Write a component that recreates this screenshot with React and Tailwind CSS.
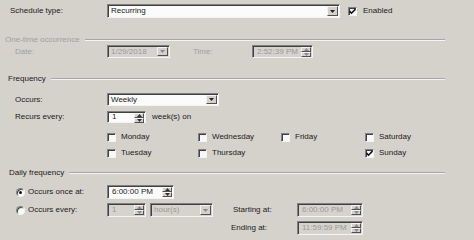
import React from "react";

function Arrow({ disabled }) {
  return (
    <svg width="5" height="3" viewBox="0 0 5 3">
      <path d="M0 0 H5 L2.5 3 Z" fill={disabled ? "#8a8a8a" : "#222"} />
    </svg>
  );
}

function DropBtn({ disabled }) {
  return (
    <div className="flex h-full w-[11px] items-center justify-center border border-t-[#f4f4f4] border-l-[#f4f4f4] border-b-[#505050] border-r-[#505050] bg-[#d4d1ca]">
      <Arrow disabled={disabled} />
    </div>
  );
}

function Combo({ className, text, disabled }) {
  return (
    <div
      className={
        "flex items-stretch border border-t-[#808080] border-l-[#808080] border-b-[#f4f4f4] border-r-[#f4f4f4] p-[1px] shadow-[inset_1px_1px_0_#404040] " +
        (disabled ? "bg-[#d6d3cc] " : "bg-[#fbfbfb] ") +
        className
      }
    >
      <div
        className={
          "flex flex-1 items-center pl-[2px] leading-none " +
          (disabled ? "text-[#9a9a9a]" : "text-[#1a1a1a]")
        }
      >
        {text}
      </div>
      <DropBtn disabled={disabled} />
    </div>
  );
}

function SpinArrow({ up, disabled }) {
  return (
    <svg width="5" height="3" viewBox="0 0 5 3">
      <path d={up ? "M0 3 H5 L2.5 0 Z" : "M0 0 H5 L2.5 3 Z"} fill={disabled ? "#8a8a8a" : "#333"} />
    </svg>
  );
}

function Spin({ className, text, disabled }) {
  return (
    <div
      className={
        "flex items-stretch border border-t-[#808080] border-l-[#808080] border-b-[#f4f4f4] border-r-[#f4f4f4] p-[1px] shadow-[inset_1px_1px_0_#404040] " +
        (disabled ? "bg-[#d6d3cc] " : "bg-[#fbfbfb] ") +
        className
      }
    >
      <div
        className={
          "flex flex-1 items-center pl-[3px] leading-none " +
          (disabled ? "text-[#9a9a9a]" : "text-[#1a1a1a]")
        }
      >
        {text}
      </div>
      <div className="flex w-[10px] flex-col">
        <div className="flex flex-1 items-center justify-center border border-t-[#f4f4f4] border-l-[#f4f4f4] border-b-[#505050] border-r-[#505050] bg-[#d4d1ca]">
          <SpinArrow up disabled={disabled} />
        </div>
        <div className="flex flex-1 items-center justify-center border border-t-[#f4f4f4] border-l-[#f4f4f4] border-b-[#505050] border-r-[#505050] bg-[#d4d1ca]">
          <SpinArrow disabled={disabled} />
        </div>
      </div>
    </div>
  );
}

function Check({ checked }) {
  return (
    <div className="flex h-[9px] w-[9px] shrink-0 items-center justify-center border border-t-[#808080] border-l-[#808080] border-b-[#f4f4f4] border-r-[#f4f4f4] bg-[#f8f8f8] shadow-[inset_1px_1px_0_#404040]">
      {checked && (
        <svg width="7" height="7" viewBox="0 0 7 7">
          <path d="M0.5 3 L2.5 5.2 L6.5 1" stroke="#111" strokeWidth="1.6" fill="none" />
        </svg>
      )}
    </div>
  );
}

function Radio({ checked }) {
  return (
    <div className="flex h-[9px] w-[9px] shrink-0 items-center justify-center rounded-full border border-t-[#808080] border-l-[#808080] border-b-[#f4f4f4] border-r-[#f4f4f4] bg-[#f8f8f8] shadow-[inset_1px_1px_0_#404040]">
      {checked && <div className="h-[3px] w-[3px] rounded-full bg-[#111]" />}
    </div>
  );
}

function Header({ text, disabled, padClass }) {
  return (
    <div className={"flex h-[10px] w-[445px] items-center " + padClass}>
      <span className={"whitespace-nowrap leading-none " + (disabled ? "text-[#a0a0a0]" : "text-[#1a1a1a]")}>
        {text}
      </span>
      <div className="ml-[5px] h-[2px] flex-1 border-t border-b border-t-[#a8a6a0] border-b-[#f4f4f4]" />
    </div>
  );
}

function Day({ label, checked, className }) {
  return (
    <div className={"flex items-center " + className}>
      <Check checked={checked} />
      <span className="ml-[5px] leading-none">{label}</span>
    </div>
  );
}

export default function App() {
  return (
    <div className="h-[240px] w-[474px] overflow-hidden bg-[#d5d2cb] font-['Liberation_Sans',Arial,sans-serif] text-[8px] text-[#1a1a1a]">
      <div className="flex flex-col">
        {/* Schedule type */}
        <div className="mt-[4px] flex h-[14px] items-center">
          <div className="w-[107px] pl-[10px] leading-none">Schedule type:</div>
          <Combo className="h-full w-[233px]" text="Recurring" />
          <div className="ml-[8px] flex items-center">
            <Check checked />
            <span className="ml-[6px] leading-none">Enabled</span>
          </div>
        </div>

        {/* One-time occurrence */}
        <div className="mt-[17px]">
          <Header text="One-time occurrence" disabled padClass="pl-[5px]" />
        </div>
        <div className="flex h-[13px] items-center">
          <div className="w-[107px] pl-[15px] leading-none text-[#a0a0a0]">Date:</div>
          <Combo className="h-full w-[63px]" text="1/29/2018" disabled />
          <div className="w-[82px] pl-[23px] leading-none text-[#a0a0a0]">Time:</div>
          <Spin className="h-full w-[61px]" text="2:52:39 PM" disabled />
        </div>

        {/* Frequency */}
        <div className="mt-[16px]">
          <Header text="Frequency" padClass="pl-[8px]" />
        </div>
        <div className="mt-[9px] flex h-[13px] items-center">
          <div className="w-[107px] pl-[15px] leading-none">Occurs:</div>
          <Combo className="h-full w-[112px]" text="Weekly" />
        </div>
        <div className="mt-[5px] flex h-[12px] items-center">
          <div className="w-[107px] pl-[15px] leading-none">Recurs every:</div>
          <Spin className="h-full w-[39px]" text="1" />
          <span className="ml-[6px] leading-none">week(s) on</span>
        </div>
        <div className="mt-[8px] flex h-[12px] items-center pl-[107px]">
          <Day label="Monday" className="w-[91px]" />
          <Day label="Wednesday" className="w-[83px]" />
          <Day label="Friday" className="w-[84px]" />
          <Day label="Saturday" />
        </div>
        <div className="mt-[4px] flex h-[12px] items-center pl-[107px]">
          <Day label="Tuesday" className="w-[91px]" />
          <Day label="Thursday" className="w-[167px]" />
          <Day label="Sunday" checked />
        </div>

        {/* Daily frequency */}
        <div className="mt-[9px]">
          <Header text="Daily frequency" padClass="pl-[9px]" />
        </div>
        <div className="mt-[7px] flex h-[14px] items-center">
          <div className="flex w-[107px] items-center pl-[16px]">
            <Radio checked />
            <span className="ml-[3px] leading-none">Occurs once at:</span>
          </div>
          <Spin className="h-full w-[67px]" text="6:00:00 PM" />
        </div>
        <div className="mt-[4px] flex h-[14px] items-center">
          <div className="flex w-[107px] items-center pl-[16px]">
            <Radio />
            <span className="ml-[3px] leading-none">Occurs every:</span>
          </div>
          <Spin className="h-full w-[39px]" text="1" disabled />
          <Combo className="ml-[4px] h-full w-[63px]" text="hour(s)" disabled />
          <div className="w-[84px] pl-[20px] leading-none">Starting at:</div>
          <Spin className="h-full w-[66px]" text="6:00:00 PM" disabled />
        </div>
        <div className="mt-[4px] flex h-[14px] items-center">
          <div className="w-[297px] pl-[231px] leading-none">Ending at:</div>
          <Spin className="h-full w-[66px]" text="11:59:59 PM" disabled />
        </div>
      </div>
    </div>
  );
}
